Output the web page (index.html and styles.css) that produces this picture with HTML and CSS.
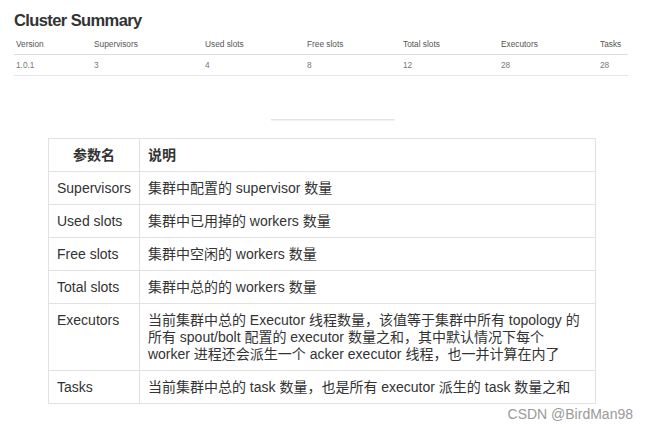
FILE: index.html
```html
<!DOCTYPE html>
<html lang="zh-CN">
<head>
<meta charset="utf-8">
<title>Cluster Summary</title>
<link rel="stylesheet" href="styles.css">
</head>
<body>
<section class="summary">
  <h2 class="summary-title">Cluster Summary</h2>
  <table class="summary-table">
    <colgroup>
      <col class="c1"><col class="c2"><col class="c3"><col class="c4"><col class="c5"><col class="c6"><col class="c7">
    </colgroup>
    <thead>
      <tr><th>Version</th><th>Supervisors</th><th>Used slots</th><th>Free slots</th><th>Total slots</th><th>Executors</th><th>Tasks</th></tr>
    </thead>
    <tbody>
      <tr><td>1.0.1</td><td>3</td><td>4</td><td>8</td><td>12</td><td>28</td><td>28</td></tr>
    </tbody>
  </table>
</section>
<hr class="divider">
<table class="params">
  <thead>
    <tr><th class="name-col">参数名</th><th class="desc-col">说明</th></tr>
  </thead>
  <tbody>
    <tr><td>Supervisors</td><td>集群中配置的 supervisor 数量</td></tr>
    <tr><td>Used slots</td><td>集群中已用掉的 workers 数量</td></tr>
    <tr><td>Free slots</td><td>集群中空闲的 workers 数量</td></tr>
    <tr><td>Total slots</td><td>集群中总的的 workers 数量</td></tr>
    <tr><td>Executors</td><td>当前集群中总的 Executor 线程数量，该值等于集群中所有 topology 的所有 spout/bolt 配置的 executor 数量之和，其中默认情况下每个 worker 进程还会派生一个 acker executor 线程，也一并计算在内了</td></tr>
    <tr><td>Tasks</td><td>当前集群中总的 task 数量，也是所有 executor 派生的 task 数量之和</td></tr>
  </tbody>
</table>
<div class="watermark">CSDN @BirdMan98</div>
</body>
</html>
```
FILE: styles.css
```css
html, body {
  margin: 0;
  padding: 0;
  background: #ffffff;
}
body {
  font-family: "Liberation Sans", "Noto Sans CJK SC", sans-serif;
  color: #333;
}
.summary {
  padding: 10px 20px 0 14px;
}
.summary-title {
  margin: 0;
  font-size: 16.5px;
  line-height: 20px;
  font-weight: bold;
  letter-spacing: -0.6px;
  color: #333;
}
.summary-table {
  margin-top: 4px;
  width: 614px;
  border-collapse: collapse;
  table-layout: fixed;
  font-size: 8.3px;
}
.c1 { width: 78px; }
.c2 { width: 111px; }
.c3 { width: 102px; }
.c4 { width: 96px; }
.c5 { width: 98px; }
.c6 { width: 99px; }
.c7 { width: 30px; }
.summary-table th {
  text-align: left;
  font-weight: normal;
  color: #555;
  padding: 5px 2px;
  line-height: 10px;
  border-bottom: 1px solid #ddd;
}
.summary-table td {
  color: #777;
  padding: 5px 2px;
  line-height: 10px;
  border-bottom: 1px solid #e6e6e6;
}
.divider {
  width: 124px;
  height: 0;
  margin: 43px 0 0 271px;
  border: 0;
  border-top: 1px solid #e2e2e2;
  border-bottom: 1px solid #f2f2f2;
}
.params {
  margin: 17px 0 0 48px;
  width: 548px;
  border-collapse: collapse;
  font-size: 14px;
  color: #333;
}
.params th,
.params td {
  border: 1px solid #e2e2e2;
  padding: 8px 8px 7px;
  line-height: 17px;
  vertical-align: top;
  text-align: left;
}
.params th {
  font-weight: bold;
}
.params .name-col {
  width: 73px;
  text-align: center;
}
.watermark {
  margin-top: 2px;
  padding-right: 15px;
  text-align: right;
  font-size: 14px;
  line-height: 17px;
  color: #9a9a9a;
}
```
